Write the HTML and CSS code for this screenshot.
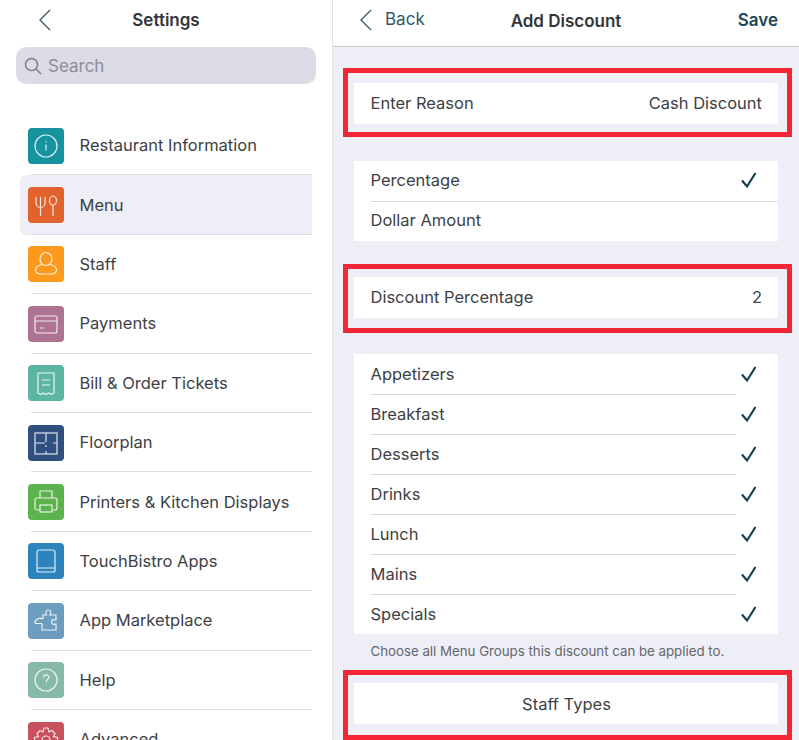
FILE: index.html
```html
<!DOCTYPE html>
<html lang="en">
<head>
<meta charset="utf-8">
<title>Add Discount</title>
<link rel="stylesheet" href="styles.css">
</head>
<body>
<div class="app">
  <aside class="side">
    <header class="side-head">
      <svg class="chev" viewBox="0 0 14 22"><path d="M12 1 2 11l10 10"/></svg>
      <h1 class="title">Settings</h1>
    </header>
    <div class="search">
      <svg class="search-ic" viewBox="0 0 18 18"><circle cx="7.5" cy="7.5" r="6"/><path d="m12 12 5 5"/></svg>
      <span>Search</span>
    </div>
    <ul class="menu">
      <li class="mi"><span class="ic c-teal"><svg viewBox="0 0 36 36"><circle cx="18" cy="18" r="11"/><path d="M18 16.500v6M18 13v1.200"/></svg></span><span class="ml">Restaurant Information</span></li>
      <li class="mi sel"><span class="ic c-orange"><svg viewBox="0 0 36 36"><path d="M8 10v6a4.500 4.500 0 0 0 9 0v-6M12.500 10v19"/><ellipse cx="25" cy="13.500" rx="3.500" ry="4.500"/><path d="M25 18v11"/></svg></span><span class="ml">Menu</span></li>
      <li class="mi"><span class="ic c-amber"><svg viewBox="0 0 36 36"><ellipse cx="18" cy="13" rx="6" ry="6.500"/><path d="M14 18.500c-5 1-6.500 3.500-6.500 5.500s2 4 5 4h11c3 0 5-2 5-4s-1.500-4.500-6.500-5.500"/></svg></span><span class="ml">Staff</span></li>
      <li class="mi"><span class="ic c-mauve"><svg viewBox="0 0 36 36"><rect x="7" y="10" width="22" height="17" rx="2"/><path d="M7 15h22M12 22h4"/></svg></span><span class="ml">Payments</span></li>
      <li class="mi"><span class="ic c-mint"><svg viewBox="0 0 36 36"><path d="M10 8h16v20l-2.700 1.500L20.700 28 18 29.500 15.300 28l-2.600 1.500L10 28z"/><path d="M14 15h8M14 20h8"/></svg></span><span class="ml">Bill &amp; Order Tickets</span></li>
      <li class="mi"><span class="ic c-navy"><svg viewBox="0 0 36 36"><rect x="7" y="8" width="22" height="21"/><path d="M7 18h10M18 8v9M18 20v2M25 18h4M18 26v3"/></svg></span><span class="ml">Floorplan</span></li>
      <li class="mi"><span class="ic c-green"><svg viewBox="0 0 36 36"><path d="M12 14V7h12v7M12 26H9a2 2 0 0 1-2-2v-8a2 2 0 0 1 2-2h18a2 2 0 0 1 2 2v8a2 2 0 0 1-2 2h-3"/><rect x="12" y="21" width="12" height="7"/></svg></span><span class="ml">Printers &amp; Kitchen Displays</span></li>
      <li class="mi"><span class="ic c-blue"><svg viewBox="0 0 36 36"><rect x="9" y="7" width="18" height="22" rx="2"/><path d="M9 25h18M18 27v.2"/></svg></span><span class="ml">TouchBistro Apps</span></li>
      <li class="mi"><span class="ic c-steel"><svg viewBox="0 0 36 36"><path d="M15 12h3.500c-1.200-1.500-.8-5 1.800-5s3 3.500 1.700 5H28v5h-1c-1.500-1-3.500 0-3.500 2s2 3 3.500 2h1v6H14v-4c1-1.200 0-2.800-1.500-2.500H9c-2.500 0-2.500-1.500-2-2.500l3.500-2.500c1.500-1 3 .5 4.500 0z"/></svg></span><span class="ml">App Marketplace</span></li>
      <li class="mi"><span class="ic c-sage"><svg viewBox="0 0 36 36"><circle cx="18" cy="18" r="11"/><path d="M15.500 15.500c0-3.500 5.500-3.500 5.500-.3 0 2-2.800 2.300-2.800 4.800M18.200 22.500v.5"/></svg></span><span class="ml">Help</span></li>
      <li class="mi"><span class="ic c-red"><svg viewBox="0 0 36 36"><circle cx="18" cy="18" r="4"/><path d="M16 6h4l1 4 3-1.500 3 3-1.500 3 4 1v4l-4 1 1.500 3-3 3-3-1.500-1 4h-4l-1-4-3 1.500-3-3 1.500-3-4-1v-4l4-1-1.500-3 3-3 3 1.500z"/></svg></span><span class="ml">Advanced</span></li>
    </ul>
  </aside>
  <main class="detail">
    <header class="nav">
      <div class="back">
        <svg class="chev" viewBox="0 0 14 22"><path d="M12 1 2 11l10 10"/></svg>
        <span>Back</span>
      </div>
      <h2 class="title nav-title">Add Discount</h2>
      <span class="save">Save</span>
    </header>
    <section class="hl hl-1">
      <div class="card"><div class="row"><span>Enter Reason</span><span>Cash Discount</span></div></div>
    </section>
    <section class="card plain type-card">
      <div class="row sep-full"><span>Percentage</span><svg class="tick" viewBox="0 0 18 18"><path d="m2 9.500 5 6L15.500 2"/></svg></div>
      <div class="row"><span>Dollar Amount</span></div>
    </section>
    <section class="hl hl-2">
      <div class="card"><div class="row"><span>Discount Percentage</span><span>2</span></div></div>
    </section>
    <section class="card plain groups">
      <div class="row sep"><span>Appetizers</span><svg class="tick" viewBox="0 0 18 18"><path d="m2 9.500 5 6L15.500 2"/></svg></div>
      <div class="row sep"><span>Breakfast</span><svg class="tick" viewBox="0 0 18 18"><path d="m2 9.500 5 6L15.500 2"/></svg></div>
      <div class="row sep"><span>Desserts</span><svg class="tick" viewBox="0 0 18 18"><path d="m2 9.500 5 6L15.500 2"/></svg></div>
      <div class="row sep"><span>Drinks</span><svg class="tick" viewBox="0 0 18 18"><path d="m2 9.500 5 6L15.500 2"/></svg></div>
      <div class="row sep"><span>Lunch</span><svg class="tick" viewBox="0 0 18 18"><path d="m2 9.500 5 6L15.500 2"/></svg></div>
      <div class="row sep"><span>Mains</span><svg class="tick" viewBox="0 0 18 18"><path d="m2 9.500 5 6L15.500 2"/></svg></div>
      <div class="row"><span>Specials</span><svg class="tick" viewBox="0 0 18 18"><path d="m2 9.500 5 6L15.500 2"/></svg></div>
    </section>
    <p class="note">Choose all Menu Groups this discount can be applied to.</p>
    <section class="hl hl-3">
      <div class="card"><div class="row center"><span>Staff Types</span></div></div>
    </section>
  </main>
</div>
</body>
</html>
```
FILE: styles.css
```css
* { box-sizing: border-box; }
html, body { margin: 0; padding: 0; height: 100%; overflow: hidden; background: #fff; }
body { font-family: Inter, "Liberation Sans", sans-serif; color: #3d4145; font-size: 16.500px; }
h1, h2, p, ul { margin: 0; padding: 0; }
.app { display: flex; width: 799px; height: 740px; overflow: hidden; }

.side { width: 333px; flex: none; border-right: 1px solid #e2e2e6; background: #fff; overflow: hidden; }
.side-head { height: 47px; padding-bottom: 7px; position: relative; display: flex; align-items: center; justify-content: center; }
.title { font-size: 17px; font-weight: 600; color: #33363a; }
.chev { width: 14px; height: 22px; fill: none; stroke: #34566a; stroke-width: 1.300; }
.side-head .chev { position: absolute; left: 38px; top: 9px; }
.search { margin: 0 16px; width: 300px; height: 37px; background: #dcdce6; border-radius: 10px; display: flex; align-items: center; gap: 6px; padding-left: 8px; color: #8d8d99; font-size: 17px; }
.search-ic { width: 18px; height: 18px; fill: none; stroke: #7d7d88; stroke-width: 1.500; }

.menu { list-style: none; margin: 32px 20px 0 0; }
.mi { height: 59.400px; margin-left: 20px; padding-left: 8px; display: flex; align-items: center; gap: 15.500px; position: relative; border-radius: 6px 0 0 6px; }
.mi::after { content: ""; position: absolute; left: 11px; right: 0; bottom: 0; height: 1px; background: #dedee2; }
.sel { background: #eeeef6; }
.ml { white-space: nowrap; margin-top: -1px; }
.ic { width: 36px; height: 36px; flex: none; border-radius: 4px; display: block; }
.ic svg { width: 36px; height: 36px; display: block; fill: none; stroke: #fff; stroke-width: 1.200; opacity: .85; }
.c-teal { background: #17939f; }
.c-orange { background: #e2622d; }
.c-amber { background: #fd9a1e; }
.c-mauve { background: #ad7391; }
.c-mint { background: #5cb5a3; }
.c-navy { background: #2f4f7f; }
.c-green { background: #5cb24c; }
.c-blue { background: #2d84bd; }
.c-steel { background: #6c9dbf; }
.c-sage { background: #86b9a8; }
.c-red { background: #c9515f; }

.detail { flex: 1; background: #eeeef6; min-width: 0; overflow: hidden; }
.nav { height: 47px; padding-bottom: 5px; background: #fff; border-bottom: 1px solid #c9c9cd; position: relative; display: flex; align-items: center; justify-content: center; }
.back { position: absolute; left: 26px; top: 9px; display: flex; align-items: center; gap: 12px; color: #34566a; font-size: 17px; }
.back span { margin-top: -2px; }
.save { position: absolute; right: 21px; top: 10px; color: #1f4658; font-size: 17px; font-weight: 600; }

.card { background: #fff; }
.plain { margin: 0 21px; }
.row { height: 40px; padding: 0 16px 2px 16.500px; display: flex; align-items: center; justify-content: space-between; position: relative; }
.groups .row { padding-bottom: 0; }
.row.center { justify-content: center; padding: 0 0 0 1px; }
.sep::after, .sep-full::after { content: ""; position: absolute; left: 17px; bottom: -1px; height: 1px; background: #dadade; }
.sep::after { right: 42px; }
.sep-full::after { right: 0; }
.tick { width: 18px; height: 18px; margin-right: 4px; fill: none; stroke: #173f50; stroke-width: 2.200; }

.hl { border: 5px solid #f42534; margin: 0 7px 0 10px; padding: 0 9px 0 6px; }
.hl .card .row { height: 41px; }
.hl-1 { margin-top: 21px; padding-top: 10px; padding-bottom: 8px; }
.type-card { margin-top: 24px; }
.hl-2 { margin-top: 23px; padding-top: 8px; padding-bottom: 10px; }
.groups { margin-top: 21px; }
.note { margin: 9px 21px 0; padding-left: 16.500px; font-size: 13.270px; color: #63676c; line-height: 17px; white-space: nowrap; }
.hl-3 { margin-top: 10px; padding-top: 8px; padding-bottom: 11px; }
```
